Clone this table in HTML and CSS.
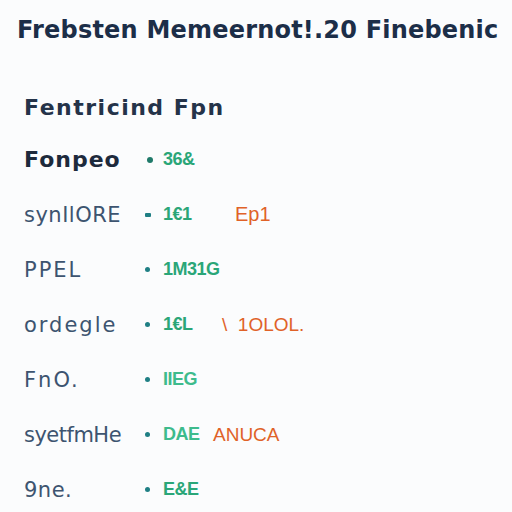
FILE: index.html
```html
<!DOCTYPE html>
<html>
<head>
<meta charset="utf-8">
<link rel="stylesheet" href="styles.css">
</head>
<body>
<main class="page">
  <h1 class="title">Frebsten Memeernot!.20 Finebenic</h1>
  <h2 class="subtitle">Fentricind Fpn</h2>
  <ul class="rows">
    <li class="row row-strong"><span class="label">Fonpeo</span><span class="dot"></span><span class="val">36&amp;</span><span class="alt"></span></li>
    <li class="row"><span class="label">synIlORE</span><span class="dot dash"></span><span class="val">1€1</span><span class="alt alt-a">Ep1</span></li>
    <li class="row"><span class="label wide">PPEL</span><span class="dot"></span><span class="val">1M31G</span><span class="alt"></span></li>
    <li class="row"><span class="label wide">ordegle</span><span class="dot"></span><span class="val">1€L</span><span class="alt alt-b">\&nbsp;&nbsp;1OLOL.</span></li>
    <li class="row"><span class="label wide">FnO.</span><span class="dot"></span><span class="val val-light">IIEG</span><span class="alt"></span></li>
    <li class="row"><span class="label tight">syetfmHe</span><span class="dot"></span><span class="val val-light">DAE</span><span class="alt">ANUCA</span></li>
    <li class="row"><span class="label">9ne.</span><span class="dot"></span><span class="val">E&amp;E</span><span class="alt"></span></li>
  </ul>
</main>
</body>
</html>
```

FILE: styles.css
```css
html, body {
  margin: 0;
  padding: 0;
  background: #fbfcfd;
}
.page {
  width: 512px;
  height: 512px;
  overflow: hidden;
  font-family: "Liberation Sans", Arial, sans-serif;
}
.title {
  margin: 15px 0 0 17px;
  height: 30px;
  line-height: 30px;
  font-family: "DejaVu Sans", sans-serif;
  font-size: 24px;
  font-weight: 700;
  color: #1c2e48;
  letter-spacing: 0.2px;
  white-space: nowrap;
}
.subtitle {
  margin: 48px 0 0 24px;
  height: 30px;
  line-height: 30px;
  font-family: "DejaVu Sans", sans-serif;
  font-size: 22px;
  font-weight: 700;
  color: #243349;
  letter-spacing: 1.5px;
  white-space: nowrap;
}
.rows {
  list-style: none;
  margin: 9px 0 0 0;
  padding: 0 0 0 24px;
}
.row {
  display: grid;
  grid-template-columns: 119px 20px 50px auto;
  align-items: center;
  height: 55px;
}
.label {
  font-family: "DejaVu Sans", sans-serif;
  font-size: 21px;
  letter-spacing: 0.5px;
  color: #3d5470;
  white-space: nowrap;
}
.label.wide {
  letter-spacing: 2px;
}
.label.tight {
  letter-spacing: -0.5px;
}
.row-strong .label {
  font-weight: 700;
  font-size: 22px;
  letter-spacing: 1px;
  color: #1d2a3c;
}
.dot {
  width: 5px;
  height: 5px;
  border-radius: 50%;
  background: #1f7f84;
  margin-left: 2px;
}
.row-strong .dot {
  background: #1f7a6a;
  width: 6px;
  height: 6px;
  margin-left: 4px;
}
.dash {
  width: 6px;
  height: 4px;
  border-radius: 1px;
}
.val {
  font-size: 18px;
  font-weight: 700;
  color: #2aa678;
  white-space: nowrap;
  letter-spacing: -0.5px;
}
.val-light {
  color: #3dbb8c;
}
.alt {
  font-size: 19px;
  color: #e06228;
  white-space: nowrap;
}
.alt-a {
  padding-left: 22px;
  font-size: 20px;
}
.alt-b {
  padding-left: 9px;
}
```
